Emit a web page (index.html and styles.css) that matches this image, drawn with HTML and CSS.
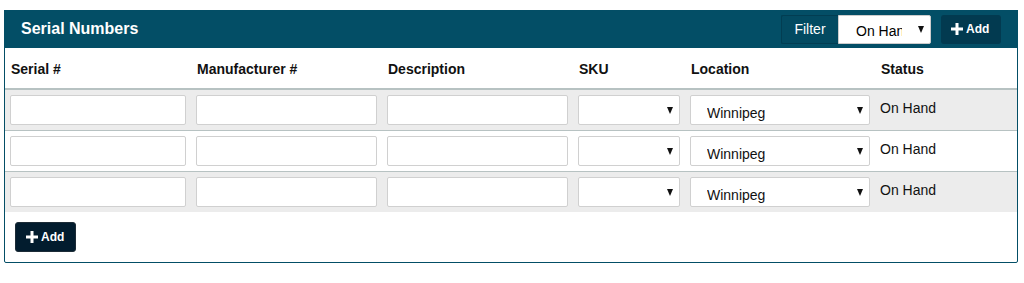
FILE: index.html
```html
<!DOCTYPE html>
<html lang="en">
<head>
  <meta charset="UTF-8" />
  <title>Serial Numbers</title>
  <link rel="stylesheet" href="styles.css">
</head>
<body>
  <div class="painel">
    <div class="painel-topo">
      <h2>Serial Numbers</h2>
      <div class="acoes">
        <div class="filtro">
          <span class="filtro-rotulo">Filter</span>
          <span class="seletor seletor-filtro">
            <select>
              <option>On Hand</option>
            </select>
          </span>
        </div>
        <button class="botao botao-topo">
          <svg width="12" height="12" viewBox="0 0 12 12"><path d="M4.5 0h3v4.5H12v3H7.5V12h-3V7.5H0v-3h4.5z" fill="#fff"/></svg>
          Add
        </button>
      </div>
    </div>

    <table>
      <colgroup>
        <col class="c1">
        <col class="c2">
        <col class="c3">
        <col class="c4">
        <col class="c5">
        <col>
      </colgroup>
      <thead>
        <tr>
          <th>Serial #</th>
          <th>Manufacturer #</th>
          <th>Description</th>
          <th>SKU</th>
          <th>Location</th>
          <th>Status</th>
        </tr>
      </thead>
      <tbody id="linhas"></tbody>
    </table>

    <div class="rodape">
      <button class="botao botao-rodape">
        <svg width="12" height="12" viewBox="0 0 12 12"><path d="M4.5 0h3v4.5H12v3H7.5V12h-3V7.5H0v-3h4.5z" fill="#fff"/></svg>
        Add
      </button>
    </div>
  </div>

  <script>
    const linhas = document.getElementById("linhas");
    for (let i = 0; i < 3; i++) {
      const tr = document.createElement("tr");
      tr.innerHTML = `
        <td><input type="text" class="campo" /></td>
        <td><input type="text" class="campo" /></td>
        <td><input type="text" class="campo" /></td>
        <td><span class="seletor"><select class="campo"><option></option></select></span></td>
        <td><span class="seletor"><select class="campo campo-local"><option>Winnipeg</option></select></span></td>
        <td class="status">On Hand</td>
      `;
      linhas.appendChild(tr);
    }
  </script>
</body>
</html>
```

FILE: styles.css
```css
body {
  font-family: "Liberation Sans", Arial, sans-serif;
  margin: 0;
  padding: 10px 6px 0 4px;
  background: #fff;
  color: #111;
}
.painel {
  border: 1px solid #034e66;
  border-radius: 2px;
}
.painel-topo {
  background: #034e66;
  height: 38px;
  display: flex;
  align-items: center;
  justify-content: space-between;
  padding: 0 17px 0 17px;
  margin: -1px -1px 0 -1px;
}
.painel-topo h2 {
  margin: 0;
  color: #fff;
  font-size: 16px;
  font-weight: bold;
}
.acoes {
  display: flex;
  align-items: center;
  gap: 10px;
}
.filtro {
  display: flex;
  height: 29px;
}
.filtro-rotulo {
  background: #034a61;
  border: 1px solid #023d52;
  border-right: none;
  color: #fff;
  font-size: 14px;
  width: 56px;
  display: flex;
  align-items: center;
  justify-content: center;
  border-radius: 2px 0 0 2px;
}
.seletor {
  position: relative;
  display: block;
}
.seletor::after {
  content: "";
  position: absolute;
  right: 7px;
  top: 50%;
  margin-top: -3px;
  border-left: 3px solid transparent;
  border-right: 3px solid transparent;
  border-top: 7px solid #111;
  pointer-events: none;
}
select {
  appearance: none;
  -webkit-appearance: none;
  font-family: "Liberation Sans", Arial, sans-serif;
}
.seletor-filtro select {
  width: 93px;
  height: 29px;
  background: #fff;
  border: 1px solid #ccc;
  border-radius: 0 2px 2px 0;
  font-size: 14px;
  color: #000;
  padding: 3px 28px 0 17px;
}
.botao {
  background: #023a50;
  color: #fff;
  border: none;
  border-radius: 3px;
  font-family: "Liberation Sans", Arial, sans-serif;
  font-size: 12px;
  font-weight: bold;
  height: 29px;
  display: flex;
  align-items: center;
  gap: 3px;
  padding: 0 10px;
}
.botao-topo {
  width: 60px;
}
.botao-rodape {
  background: #021c2e;
  width: 61px;
  height: 30px;
  border: 1px solid #1c2b36;
}
table {
  width: 100%;
  border-collapse: collapse;
  table-layout: fixed;
}
col.c1 { width: 186px; }
col.c2 { width: 191px; }
col.c3 { width: 191px; }
col.c4 { width: 112px; }
col.c5 { width: 190px; }
th {
  text-align: left;
  font-size: 14px;
  font-weight: bold;
  color: #111;
  height: 38px;
  padding: 2px 5px 0 6px;
  border-bottom: 2px solid #b7c2c2;
}
td {
  padding: 5px;
  border-top: 1px solid #b7c2c2;
}
tbody tr:nth-child(odd) {
  background: #ececec;
}
tbody tr:first-child td {
  border-top: none;
}
.campo {
  display: block;
  width: 100%;
  box-sizing: border-box;
  height: 30px;
  margin: 0;
  border: 1px solid #d0d0d0;
  border-radius: 2px;
  background: #fff;
  font-size: 14px;
}
.campo-local {
  padding: 5px 0 0 16px;
  color: #111;
}
.status {
  font-size: 14px;
  vertical-align: top;
  padding-top: 10px;
  color: #111;
}
.rodape {
  padding: 10px;
}
```
